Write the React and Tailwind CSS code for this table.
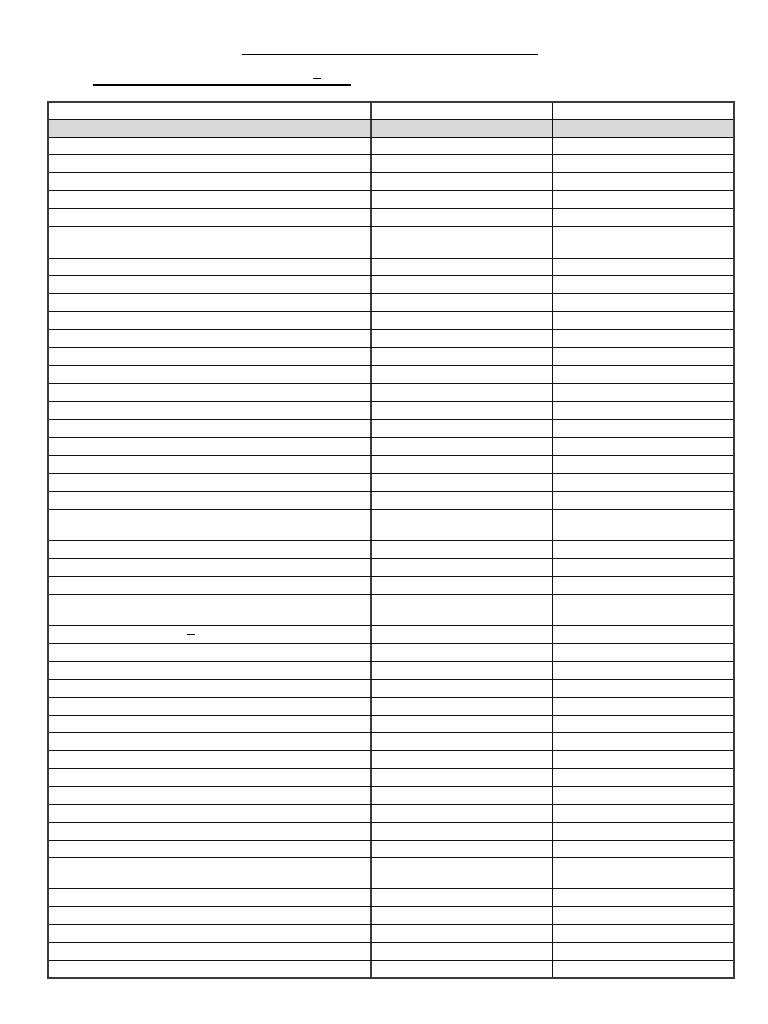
import React from "react";

const bounds = [101,119,137,154,172,190,208,226,258,275,293,311,329,347,365,383,401,419,437,455,473,491,509,540,558,576,594,625,643,661,679,697,715,732,750,768,786,804,822,840,857,888,906,924,942,960,977];

export default function App() {
  const rows = [];
  for (let i = 0; i < bounds.length - 1; i++) {
    rows.push({ h: bounds[i + 1] - bounds[i], gray: i === 1, dash: bounds[i] === 625 });
  }
  return (
    <div className="w-[768px] h-[1024px] bg-white" style={{ fontFamily: '"Liberation Sans", Arial, sans-serif' }}>
      <div className="pt-[54px]">
        <div className="ml-[242px] w-[296px] h-px bg-black" />
        <div className="mt-[23px] ml-[313px] w-[8px] h-px bg-black" />
        <div className="mt-[5px] ml-[93px] w-[258px] h-[2px] bg-black" />
      </div>
      <div className="mt-[15px] ml-[47px] w-[688px] border-l-2 border-r-2 border-b-2 border-[#3a3a3a]">
        {rows.map((r, i) => (
          <div
            key={i}
            className={`flex border-t ${i === 0 ? "border-t-2 border-[#3a3a3a]" : "border-[#111]"} ${r.gray ? "bg-[#d9d9d9]" : ""}`}
            style={{ height: r.h }}
          >
            <div className="w-[323px] shrink-0 border-r-2 border-[#3a3a3a] flex items-center">
              {r.dash && <div className="ml-[138px] w-[8px] h-px bg-black" />}
            </div>
            <div className="w-[181px] shrink-0 border-r border-[#111]" />
            <div className="flex-1" />
          </div>
        ))}
      </div>
    </div>
  );
}
